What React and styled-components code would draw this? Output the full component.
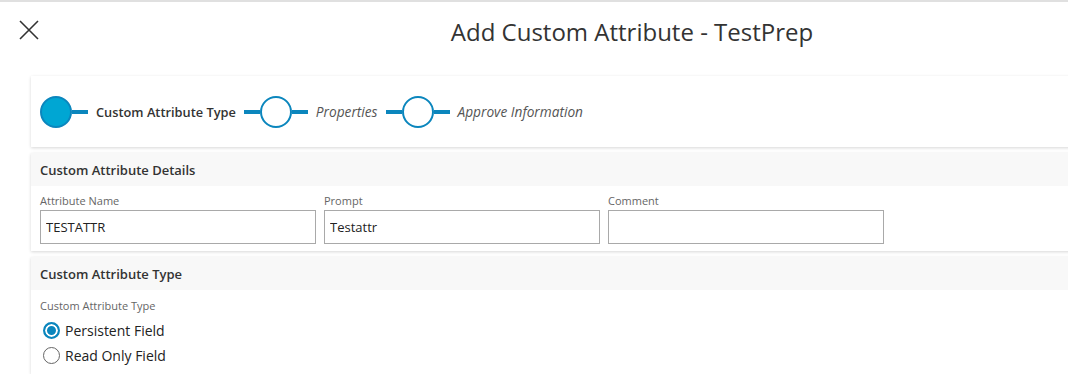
import styled, { createGlobalStyle } from 'styled-components'

const Global = createGlobalStyle`
  html, body { margin: 0; padding: 0; background: #fff; overflow: hidden; }
  body { font-family: "Open Sans", "Noto Sans", sans-serif; color: #333; }
`

const Page = styled.div`
  width: 1264px;
  border-top: 2px solid #e0e0e0;
`

const Header = styled.div`
  display: grid;
  grid-template-columns: 60px 1fr 60px;
  align-items: center;
  height: 74px;
`

const CloseBtn = styled.button`
  border: none;
  background: transparent;
  padding: 0;
  margin: 0 0 18px 18px;
  width: 22px;
  height: 22px;
  cursor: pointer;
`

const Title = styled.h1`
  margin: 0 0 16px;
  text-align: center;
  font-size: 24px;
  font-weight: 400;
  color: #333;
`

const Body = styled.div`
  display: flex;
  flex-direction: column;
  gap: 6px;
  padding-left: 31px;
`

const Panel = styled.div`
  width: 1200px;
  background: #fff;
  box-shadow: 0 1px 3px rgba(0, 0, 0, 0.16);
`

const Stepper = styled.div`
  display: flex;
  align-items: center;
  height: 71px;
  padding-left: 9px;
`

const Dot = styled.span`
  width: 32px;
  height: 32px;
  box-sizing: border-box;
  border-radius: 50%;
  border: 2px solid #0b86bd;
  background: ${p => (p.$active ? '#00a6d3' : '#fff')};
`

const Link = styled.span`
  width: 16px;
  height: 4px;
  background: #0b86bd;
`

const StepLabel = styled.span`
  font-size: ${p => (p.$active ? '12.8px' : '13.7px')};
  font-weight: ${p => (p.$active ? 600 : 400)};
  font-style: ${p => (p.$active ? 'normal' : 'italic')};
  color: ${p => (p.$active ? '#333' : '#555')};
  margin: 0 8px 0 8px;
`

const PanelHead = styled.div`
  height: 33px;
  display: flex;
  align-items: center;
  padding-left: 9px;
  background: #f8f8f8;
  font-size: 13px;
  font-weight: 600;
  color: #333;
`

const Fields = styled.div`
  display: flex;
  gap: 8px;
  padding: 7px 9px 7px;
`

const Field = styled.label`
  display: flex;
  flex-direction: column;
  gap: 2px;
`

const Label = styled.span`
  font-size: 11px;
  color: #666;
  line-height: 15px;
`

const Input = styled.input`
  box-sizing: border-box;
  width: 276px;
  height: 34px;
  border: 1px solid #a9a9a9;
  padding: 0 5px;
  font-family: inherit;
  font-size: 13px;
  color: #222;
  outline: none;
`

const TypeBody = styled.div`
  padding: 8px 9px 6px;
  display: flex;
  flex-direction: column;
`

const RadioRow = styled.label`
  display: flex;
  align-items: center;
  gap: 5px;
  height: 25px;
  font-size: 14px;
  color: #222;
  padding-left: 3px;
  cursor: pointer;
`

const RadioMark = styled.span`
  box-sizing: border-box;
  width: 17px;
  height: 17px;
  border-radius: 50%;
  border: ${p => (p.$on ? '2px solid #0b86bd' : '1px solid #666')};
  background: ${p => (p.$on ? '#0b86bd' : '#fff')};
  box-shadow: ${p => (p.$on ? 'inset 0 0 0 2px #fff' : 'none')};
`

const steps = [
  { label: 'Custom Attribute Type', active: true },
  { label: 'Properties' },
  { label: 'Approve Information' },
]

export default function App() {
  return (
    <Page>
      <Global />
      <Header>
        <CloseBtn aria-label="Close">
          <svg width="22" height="22" viewBox="0 0 22 22">
            <path d="M2 2 L20 20 M20 2 L2 20" stroke="#333" strokeWidth="1.6" fill="none" />
          </svg>
        </CloseBtn>
        <Title>Add Custom Attribute - TestPrep</Title>
        <div />
      </Header>
      <Body>
        <Panel>
          <Stepper>
            {steps.map((s, i) => (
              <span key={s.label} style={{ display: 'contents' }}>
                {i > 0 && <Link />}
                <Dot $active={s.active} />
                <Link />
                <StepLabel $active={s.active}>{s.label}</StepLabel>
              </span>
            ))}
          </Stepper>
        </Panel>
        <Panel>
          <PanelHead>Custom Attribute Details</PanelHead>
          <Fields>
            <Field>
              <Label>Attribute Name</Label>
              <Input defaultValue="TESTATTR" />
            </Field>
            <Field>
              <Label>Prompt</Label>
              <Input defaultValue="Testattr" />
            </Field>
            <Field>
              <Label>Comment</Label>
              <Input defaultValue="" />
            </Field>
          </Fields>
        </Panel>
        <Panel>
          <PanelHead>Custom Attribute Type</PanelHead>
          <TypeBody>
            <Label style={{ marginBottom: 5 }}>Custom Attribute Type</Label>
            <RadioRow>
              <RadioMark $on />
              Persistent Field
            </RadioRow>
            <RadioRow>
              <RadioMark />
              Read Only Field
            </RadioRow>
          </TypeBody>
        </Panel>
      </Body>
    </Page>
  )
}
